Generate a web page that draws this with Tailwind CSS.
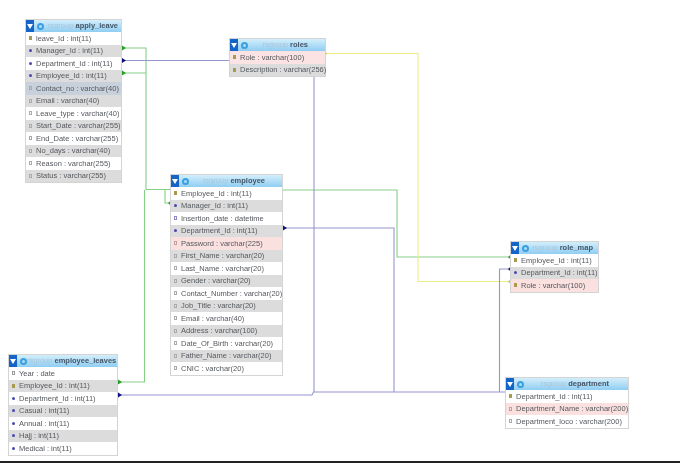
<!DOCTYPE html>
<html lang="en">
<head>
    <meta charset="UTF-8">
    <meta name="viewport" content="width=device-width, initial-scale=1.0">
    <title>Designer</title>
    <script src="https://cdn.jsdelivr.net/npm/@tailwindcss/browser@4"></script>
</head>
<body class="bg-white overflow-hidden">
<div class="relative w-[680px] h-[463px] overflow-hidden bg-white blur-[0.6px] font-['Liberation_Sans',sans-serif] text-[7.5px] text-[#55595e]">

    <!-- relation lines -->
    <svg class="absolute left-0 top-0" width="680" height="463" fill="none" stroke-width="1.1">
        <g stroke="#86d086">
            <path d="M122 48H146V189.5H170M122 73H146M165 189.5V203H170"/>
            <path d="M118 382H144.5V190"/>
            <path d="M283 190H397V257H510"/>
        </g>
        <g stroke="#ecec84">
            <path d="M326 53.5H418V281.5H510"/>
        </g>
        <g stroke="#9696cf">
            <path d="M122 60.5H229"/>
            <path d="M314 76V392"/>
            <path d="M283 228H394V392"/>
            <path d="M118 395H312L313.5 392H505"/>
            <path d="M510 269H499.5V392"/>
        </g>
        <!-- end markers -->
        <path d="M122 45.5L126 48L122 50.5ZM122 70.5L126 73L122 75.5ZM118 379.5L122 382L118 384.5Z" fill="#22a022"/>
        <path d="M122 58L126 60.5L122 63ZM118 392.5L122 395L118 397.5ZM283 225.5L287 228L283 230.5Z" fill="#101080"/>
        <circle cx="170" cy="203" r="1.6" fill="#30a030"/>
        <circle cx="510" cy="257" r="1.6" fill="#30a030"/>
        <circle cx="510" cy="269" r="1.6" fill="#101080"/>
        <circle cx="510" cy="281.5" r="1.6" fill="#c8c850"/>
        <circle cx="326" cy="53.5" r="1" fill="#c8c850"/>
    </svg>

    <!-- apply_leave -->
    <div class="absolute left-[25px] top-[19px] w-[97px] border border-[#d4d4d4]">
        <div class="flex items-center h-[12px] bg-gradient-to-b from-[#d3eefb] to-[#8fcdf2]">
            <span class="flex items-center justify-center shrink-0 w-[8px] h-[12px] bg-[#1565c8]"><span class="w-0 h-0 border-x-[3px] border-x-transparent border-t-[5px] border-t-white"></span></span>
            <span class="ml-[3px] shrink-0 w-[7px] h-[7px] rounded-full border-2 border-[#3aa0e0]"></span>
            <span class="ml-auto pr-[3px] whitespace-nowrap"><span class="text-[#a9c6d8]">rsgroup </span><b class="text-[#445566]">apply_leave</b></span>
        </div>
        <div class="flex items-center h-[12.5px] bg-white pl-[3px] whitespace-nowrap"><span class="shrink-0 w-[3px] h-[4px] mr-[4px] bg-[#a89a50]"></span>leave_Id : int(11)</div>
        <div class="flex items-center h-[12.5px] bg-[#dcdcdc] pl-[3px] whitespace-nowrap"><span class="shrink-0 w-[3px] h-[3px] mr-[4px] rounded-full bg-[#4848b0]"></span>Manager_Id : int(11)</div>
        <div class="flex items-center h-[12.5px] bg-white pl-[3px] whitespace-nowrap"><span class="shrink-0 w-[3px] h-[3px] mr-[4px] rounded-full bg-[#4848b0]"></span>Department_Id : int(11)</div>
        <div class="flex items-center h-[12.5px] bg-[#dcdcdc] pl-[3px] whitespace-nowrap"><span class="shrink-0 w-[3px] h-[3px] mr-[4px] rounded-full bg-[#4848b0]"></span>Employee_Id : int(11)</div>
        <div class="flex items-center h-[12.5px] bg-[#c8d0dc] pl-[3px] whitespace-nowrap"><span class="shrink-0 w-[3px] h-[4px] mr-[4px] border border-[#aaa]"></span>Contact_no : varchar(40)</div>
        <div class="flex items-center h-[12.5px] bg-[#dcdcdc] pl-[3px] whitespace-nowrap"><span class="shrink-0 w-[3px] h-[4px] mr-[4px] border border-[#aaa]"></span>Email : varchar(40)</div>
        <div class="flex items-center h-[12.5px] bg-white pl-[3px] whitespace-nowrap"><span class="shrink-0 w-[3px] h-[4px] mr-[4px] border border-[#aaa]"></span>Leave_type : varchar(40)</div>
        <div class="flex items-center h-[12.5px] bg-[#dcdcdc] pl-[3px] whitespace-nowrap"><span class="shrink-0 w-[3px] h-[4px] mr-[4px] border border-[#aaa]"></span>Start_Date : varchar(255)</div>
        <div class="flex items-center h-[12.5px] bg-white pl-[3px] whitespace-nowrap"><span class="shrink-0 w-[3px] h-[4px] mr-[4px] border border-[#aaa]"></span>End_Date : varchar(255)</div>
        <div class="flex items-center h-[12.5px] bg-[#dcdcdc] pl-[3px] whitespace-nowrap"><span class="shrink-0 w-[3px] h-[4px] mr-[4px] border border-[#aaa]"></span>No_days : varchar(40)</div>
        <div class="flex items-center h-[12.5px] bg-white pl-[3px] whitespace-nowrap"><span class="shrink-0 w-[3px] h-[4px] mr-[4px] border border-[#aaa]"></span>Reason : varchar(255)</div>
        <div class="flex items-center h-[12.5px] bg-[#dcdcdc] pl-[3px] whitespace-nowrap"><span class="shrink-0 w-[3px] h-[4px] mr-[4px] border border-[#aaa]"></span>Status : varchar(255)</div>
    </div>

    <!-- roles -->
    <div class="absolute left-[229px] top-[38px] w-[97px] border border-[#d4d4d4]">
        <div class="flex items-center h-[12px] bg-gradient-to-b from-[#d3eefb] to-[#8fcdf2]">
            <span class="flex items-center justify-center shrink-0 w-[8px] h-[12px] bg-[#1565c8]"><span class="w-0 h-0 border-x-[3px] border-x-transparent border-t-[5px] border-t-white"></span></span>
            <span class="ml-[3px] shrink-0 w-[7px] h-[7px] rounded-full border-2 border-[#3aa0e0]"></span>
            <span class="ml-auto pr-[17px] whitespace-nowrap"><span class="text-[#a9c6d8]">rsgroup </span><b class="text-[#445566]">roles</b></span>
        </div>
        <div class="flex items-center h-[12.5px] bg-[#fbe3e3] pl-[3px] whitespace-nowrap"><span class="shrink-0 w-[3px] h-[4px] mr-[4px] bg-[#a89a50]"></span>Role : varchar(100)</div>
        <div class="flex items-center h-[12.5px] bg-[#dcdcdc] pl-[3px] whitespace-nowrap"><span class="shrink-0 w-[3px] h-[4px] mr-[4px] bg-[#a89a50]"></span>Description : varchar(256)</div>
    </div>

    <!-- employee -->
    <div class="absolute left-[170px] top-[174px] w-[113px] border border-[#d4d4d4]">
        <div class="flex items-center h-[12px] bg-gradient-to-b from-[#d3eefb] to-[#8fcdf2]">
            <span class="flex items-center justify-center shrink-0 w-[8px] h-[12px] bg-[#1565c8]"><span class="w-0 h-0 border-x-[3px] border-x-transparent border-t-[5px] border-t-white"></span></span>
            <span class="ml-[3px] shrink-0 w-[7px] h-[7px] rounded-full border-2 border-[#3aa0e0]"></span>
            <span class="ml-auto pr-[17px] whitespace-nowrap"><span class="text-[#a9c6d8]">rsgroup </span><b class="text-[#445566]">employee</b></span>
        </div>
        <div class="flex items-center h-[12.5px] bg-white pl-[3px] whitespace-nowrap"><span class="shrink-0 w-[3px] h-[4px] mr-[4px] bg-[#a89a50]"></span>Employee_Id : int(11)</div>
        <div class="flex items-center h-[12.5px] bg-[#dcdcdc] pl-[3px] whitespace-nowrap"><span class="shrink-0 w-[3px] h-[3px] mr-[4px] rounded-full bg-[#4848b0]"></span>Manager_Id : int(11)</div>
        <div class="flex items-center h-[12.5px] bg-white pl-[3px] whitespace-nowrap"><span class="shrink-0 w-[3px] h-[4px] mr-[4px] border border-[#8a8ac0]"></span>Insertion_date : datetime</div>
        <div class="flex items-center h-[12.5px] bg-[#dcdcdc] pl-[3px] whitespace-nowrap"><span class="shrink-0 w-[3px] h-[3px] mr-[4px] rounded-full bg-[#4848b0]"></span>Department_Id : int(11)</div>
        <div class="flex items-center h-[12.5px] bg-[#fbe0e0] pl-[3px] whitespace-nowrap"><span class="shrink-0 w-[3px] h-[4px] mr-[4px] border border-[#c8a0a0]"></span>Password : varchar(225)</div>
        <div class="flex items-center h-[12.5px] bg-[#dcdcdc] pl-[3px] whitespace-nowrap"><span class="shrink-0 w-[3px] h-[4px] mr-[4px] border border-[#aaa]"></span>First_Name : varchar(20)</div>
        <div class="flex items-center h-[12.5px] bg-white pl-[3px] whitespace-nowrap"><span class="shrink-0 w-[3px] h-[4px] mr-[4px] border border-[#aaa]"></span>Last_Name : varchar(20)</div>
        <div class="flex items-center h-[12.5px] bg-[#dcdcdc] pl-[3px] whitespace-nowrap"><span class="shrink-0 w-[3px] h-[4px] mr-[4px] border border-[#aaa]"></span>Gender : varchar(20)</div>
        <div class="flex items-center h-[12.5px] bg-white pl-[3px] whitespace-nowrap"><span class="shrink-0 w-[3px] h-[4px] mr-[4px] border border-[#aaa]"></span>Contact_Number : varchar(20)</div>
        <div class="flex items-center h-[12.5px] bg-[#dcdcdc] pl-[3px] whitespace-nowrap"><span class="shrink-0 w-[3px] h-[4px] mr-[4px] border border-[#aaa]"></span>Job_Title : varchar(20)</div>
        <div class="flex items-center h-[12.5px] bg-white pl-[3px] whitespace-nowrap"><span class="shrink-0 w-[3px] h-[4px] mr-[4px] border border-[#aaa]"></span>Email : varchar(40)</div>
        <div class="flex items-center h-[12.5px] bg-[#dcdcdc] pl-[3px] whitespace-nowrap"><span class="shrink-0 w-[3px] h-[4px] mr-[4px] border border-[#aaa]"></span>Address : varchar(100)</div>
        <div class="flex items-center h-[12.5px] bg-white pl-[3px] whitespace-nowrap"><span class="shrink-0 w-[3px] h-[4px] mr-[4px] border border-[#aaa]"></span>Date_Of_Birth : varchar(20)</div>
        <div class="flex items-center h-[12.5px] bg-[#dcdcdc] pl-[3px] whitespace-nowrap"><span class="shrink-0 w-[3px] h-[4px] mr-[4px] border border-[#aaa]"></span>Father_Name : varchar(20)</div>
        <div class="flex items-center h-[12.5px] bg-white pl-[3px] whitespace-nowrap"><span class="shrink-0 w-[3px] h-[4px] mr-[4px] border border-[#aaa]"></span>CNIC : varchar(20)</div>
    </div>

    <!-- employee_leaves -->
    <div class="absolute left-[8px] top-[354px] w-[110px] border border-[#d4d4d4]">
        <div class="flex items-center h-[12px] bg-gradient-to-b from-[#d3eefb] to-[#8fcdf2]">
            <span class="flex items-center justify-center shrink-0 w-[8px] h-[12px] bg-[#1565c8]"><span class="w-0 h-0 border-x-[3px] border-x-transparent border-t-[5px] border-t-white"></span></span>
            <span class="ml-[3px] shrink-0 w-[7px] h-[7px] rounded-full border-2 border-[#3aa0e0]"></span>
            <span class="ml-auto pr-[1px] whitespace-nowrap"><span class="text-[#a9c6d8]">rsgroup </span><b class="text-[#445566]">employee_leaves</b></span>
        </div>
        <div class="flex items-center h-[12.5px] bg-white pl-[3px] whitespace-nowrap"><span class="shrink-0 w-[3px] h-[4px] mr-[4px] border border-[#999]"></span>Year : date</div>
        <div class="flex items-center h-[12.5px] bg-[#dcdcdc] pl-[3px] whitespace-nowrap"><span class="shrink-0 w-[3px] h-[4px] mr-[4px] bg-[#a89a50]"></span>Employee_Id : int(11)</div>
        <div class="flex items-center h-[12.5px] bg-white pl-[3px] whitespace-nowrap"><span class="shrink-0 w-[3px] h-[3px] mr-[4px] rounded-full bg-[#4848b0]"></span>Department_Id : int(11)</div>
        <div class="flex items-center h-[12.5px] bg-[#dcdcdc] pl-[3px] whitespace-nowrap"><span class="shrink-0 w-[3px] h-[3px] mr-[4px] rounded-full bg-[#4848b0]"></span>Casual : int(11)</div>
        <div class="flex items-center h-[12.5px] bg-white pl-[3px] whitespace-nowrap"><span class="shrink-0 w-[3px] h-[3px] mr-[4px] rounded-full bg-[#4848b0]"></span>Annual : int(11)</div>
        <div class="flex items-center h-[12.5px] bg-[#dcdcdc] pl-[3px] whitespace-nowrap"><span class="shrink-0 w-[3px] h-[3px] mr-[4px] rounded-full bg-[#4848b0]"></span>Hajj : int(11)</div>
        <div class="flex items-center h-[12.5px] bg-white pl-[3px] whitespace-nowrap"><span class="shrink-0 w-[3px] h-[3px] mr-[4px] rounded-full bg-[#4848b0]"></span>Medical : int(11)</div>
    </div>

    <!-- role_map -->
    <div class="absolute left-[510px] top-[241px] w-[89px] border border-[#d4d4d4]">
        <div class="flex items-center h-[12px] bg-gradient-to-b from-[#d3eefb] to-[#8fcdf2]">
            <span class="flex items-center justify-center shrink-0 w-[8px] h-[12px] bg-[#1565c8]"><span class="w-0 h-0 border-x-[3px] border-x-transparent border-t-[5px] border-t-white"></span></span>
            <span class="ml-[3px] shrink-0 w-[7px] h-[7px] rounded-full border-2 border-[#3aa0e0]"></span>
            <span class="ml-auto pr-[5px] whitespace-nowrap"><span class="text-[#a9c6d8]">rsgroup </span><b class="text-[#445566]">role_map</b></span>
        </div>
        <div class="flex items-center h-[12.5px] bg-white pl-[3px] whitespace-nowrap"><span class="shrink-0 w-[3px] h-[4px] mr-[4px] bg-[#a89a50]"></span>Employee_Id : int(11)</div>
        <div class="flex items-center h-[12.5px] bg-[#dcdcdc] pl-[3px] whitespace-nowrap"><span class="shrink-0 w-[3px] h-[3px] mr-[4px] rounded-full bg-[#4848b0]"></span>Department_Id : int(11)</div>
        <div class="flex items-center h-[12.5px] bg-[#fbe0e0] pl-[3px] whitespace-nowrap"><span class="shrink-0 w-[3px] h-[4px] mr-[4px] bg-[#a89a50]"></span>Role : varchar(100)</div>
    </div>

    <!-- department -->
    <div class="absolute left-[505px] top-[377px] w-[124px] border border-[#d4d4d4]">
        <div class="flex items-center h-[12px] bg-gradient-to-b from-[#d3eefb] to-[#8fcdf2]">
            <span class="flex items-center justify-center shrink-0 w-[8px] h-[12px] bg-[#1565c8]"><span class="w-0 h-0 border-x-[3px] border-x-transparent border-t-[5px] border-t-white"></span></span>
            <span class="ml-[3px] shrink-0 w-[7px] h-[7px] rounded-full border-2 border-[#3aa0e0]"></span>
            <span class="ml-auto pr-[19px] whitespace-nowrap"><span class="text-[#a9c6d8]">rsgroup </span><b class="text-[#445566]">department</b></span>
        </div>
        <div class="flex items-center h-[12.5px] bg-white pl-[3px] whitespace-nowrap"><span class="shrink-0 w-[3px] h-[4px] mr-[4px] bg-[#a89a50]"></span>Department_Id : int(11)</div>
        <div class="flex items-center h-[12.5px] bg-[#fbe0e0] pl-[3px] whitespace-nowrap"><span class="shrink-0 w-[3px] h-[4px] mr-[4px] border border-[#c8a0a0]"></span>Department_Name : varchar(200)</div>
        <div class="flex items-center h-[12.5px] bg-white pl-[3px] whitespace-nowrap"><span class="shrink-0 w-[3px] h-[4px] mr-[4px] border border-[#aaa]"></span>Department_loco : varchar(200)</div>
    </div>

    <!-- window edge -->
    <div class="absolute left-0 bottom-0 w-full h-[2px] bg-[#222]"></div>
</div>
</body>
</html>
